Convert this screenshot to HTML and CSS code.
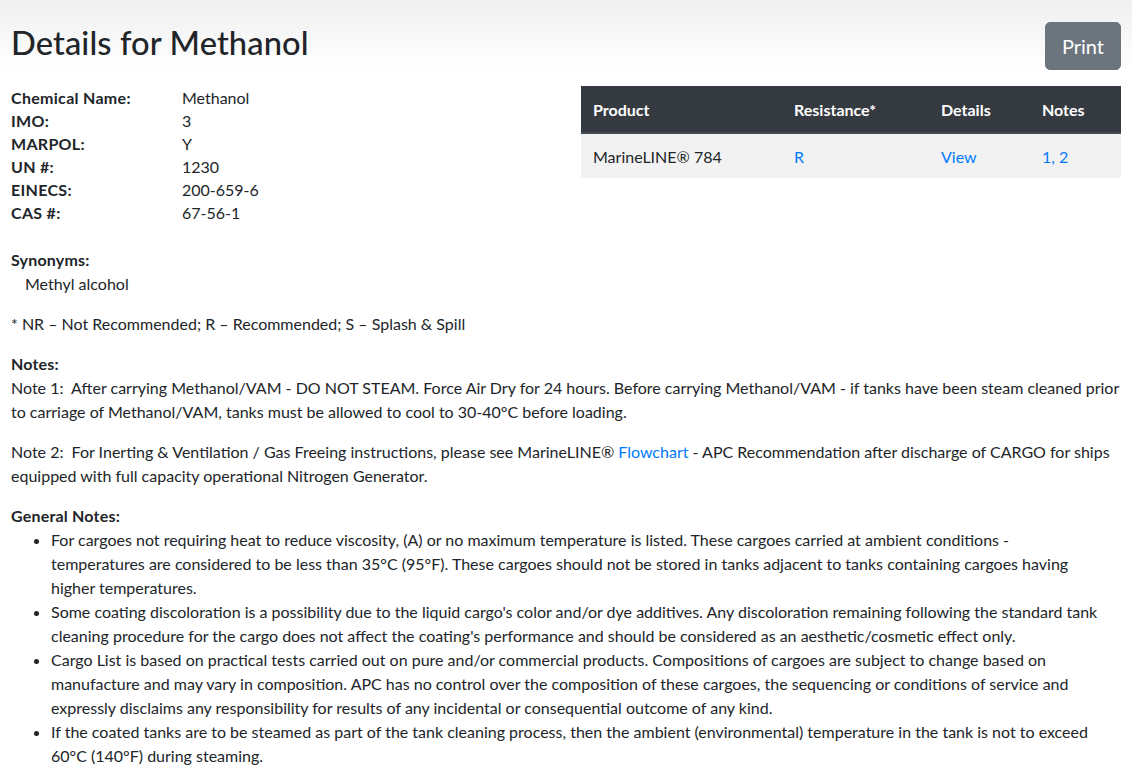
FILE: index.html
```html
<!DOCTYPE html>
<html lang="en">
<head>
<meta charset="utf-8">
<title>Details for Methanol</title>
<link rel="stylesheet" href="styles.css">
</head>
<body>
<div class="page">
  <header class="page-head">
    <h2 class="title">Details for Methanol</h2>
    <button class="btn-print" type="button">Print</button>
  </header>

  <section class="overview">
    <div class="props">
      <div class="prop"><span class="prop-label">Chemical Name:</span><span class="prop-value">Methanol</span></div>
      <div class="prop"><span class="prop-label">IMO:</span><span class="prop-value">3</span></div>
      <div class="prop"><span class="prop-label">MARPOL:</span><span class="prop-value">Y</span></div>
      <div class="prop"><span class="prop-label">UN #:</span><span class="prop-value">1230</span></div>
      <div class="prop"><span class="prop-label">EINECS:</span><span class="prop-value">200-659-6</span></div>
      <div class="prop"><span class="prop-label">CAS #:</span><span class="prop-value">67-56-1</span></div>
    </div>
    <table class="products">
      <thead>
        <tr>
          <th class="c-product">Product</th>
          <th class="c-resist">Resistance*</th>
          <th class="c-details">Details</th>
          <th class="c-notes">Notes</th>
        </tr>
      </thead>
      <tbody>
        <tr>
          <td>MarineLINE® 784</td>
          <td><a href="#">R</a></td>
          <td><a href="#">View</a></td>
          <td><a href="#">1, 2</a></td>
        </tr>
      </tbody>
    </table>
  </section>

  <div class="block">
    <div class="label">Synonyms:</div>
    <div class="synonym">Methyl alcohol</div>
  </div>

  <p class="para">* NR – Not Recommended; R – Recommended; S – Splash &amp; Spill</p>

  <div class="label">Notes:</div>
  <p class="para">Note 1:&nbsp; After carrying Methanol/VAM - DO NOT STEAM. Force Air Dry for 24 hours. Before carrying Methanol/VAM - if tanks have been steam cleaned prior to carriage of Methanol/VAM, tanks must be allowed to cool to 30-40°C before loading.</p>
  <p class="para">Note 2:&nbsp; For Inerting &amp; Ventilation / Gas Freeing instructions, please see MarineLINE® <a href="#">Flowchart</a> - APC Recommendation after discharge of CARGO for ships equipped with full capacity operational Nitrogen Generator.</p>

  <div class="label">General Notes:</div>
  <ul class="general">
    <li>For cargoes not requiring heat to reduce viscosity, (A) or no maximum temperature is listed. These cargoes carried at ambient conditions - temperatures are considered to be less than 35°C (95°F). These cargoes should not be stored in tanks adjacent to tanks containing cargoes having higher temperatures.</li>
    <li>Some coating discoloration is a possibility due to the liquid cargo's color and/or dye additives. Any discoloration remaining following the standard tank cleaning procedure for the cargo does not affect the coating's performance and should be considered as an aesthetic/cosmetic effect only.</li>
    <li>Cargo List is based on practical tests carried out on pure and/or commercial products. Compositions of cargoes are subject to change based on manufacture and may vary in composition. APC has no control over the composition of these cargoes, the sequencing or conditions of service and expressly disclaims any responsibility for results of any incidental or consequential outcome of any kind.</li>
    <li>If the coated tanks are to be steamed as part of the tank cleaning process, then the ambient (environmental) temperature in the tank is not to exceed 60°C (140°F) during steaming.</li>
  </ul>
</div>
</body>
</html>
```
FILE: styles.css
```css
* { box-sizing: border-box; }
html, body { margin: 0; }
body {
  font-family: Lato, "Liberation Sans", Arial, sans-serif;
  font-size: 16px;
  line-height: 24px;
  color: #212529;
  background: linear-gradient(#efefef 0, #ffffff 70px) no-repeat #fff;
}
a { color: #007bff; text-decoration: none; }
.page { padding: 0 11px; }
.page-head {
  display: flex;
  justify-content: space-between;
  align-items: flex-start;
  padding-top: 22px;
}
.title {
  margin: 2px 0 0;
  font-size: 32.7px;
  line-height: 38px;
  font-weight: 500;
  letter-spacing: 0.1px;
}
.btn-print {
  font: inherit;
  font-size: 20px;
  line-height: 30px;
  color: #fff;
  background: #6c757d;
  border: 1px solid #6c757d;
  border-radius: 5px;
  padding: 8px 16px;
}
.overview {
  display: flex;
  justify-content: space-between;
  margin-top: 16px;
}
.prop { display: flex; height: 23px; line-height: 23px; }
.prop-label { width: 171px; font-weight: 700; letter-spacing: 0.3px; }
.products {
  width: 540px;
  border-collapse: collapse;
  align-self: flex-start;
}
.products th {
  background: #343a40;
  color: #fff;
  font-weight: 700;
  text-align: left;
  padding: 12px 12px 10px;
  border-bottom: 2px solid #454d55;
  line-height: 24px;
}
.products td {
  background: #f2f2f2;
  padding: 11px 12px 9px;
  line-height: 24px;
}
.c-product { width: 201px; }
.c-resist { width: 147px; }
.c-details { width: 101px; }
.c-notes { width: 91px; }
.block { margin-top: 24px; margin-bottom: 16px; }
.label { font-weight: 700; letter-spacing: 0.2px; }
.synonym { padding-left: 14px; }
.para { margin: 0 0 16px; }
.general { margin: 0; padding-left: 40px; padding-right: 18px; }
```
